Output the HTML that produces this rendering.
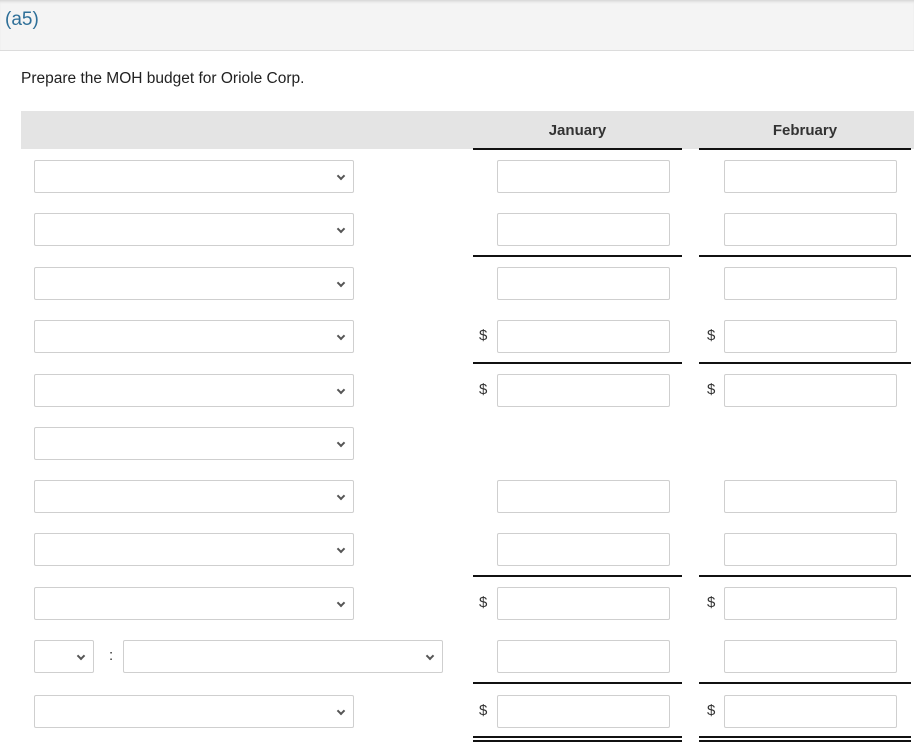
<!DOCTYPE html>
<html><head><style>
body{margin:0;width:914px;height:755px;background:#fff;font-family:"Liberation Sans",sans-serif;position:relative;overflow:hidden}
.hdr{position:absolute;left:0;top:0;width:914px;height:50px;background:#f4f4f4;border-bottom:1px solid #dcdcdc;box-shadow:inset 0 3px 3px -2px #ccc}
.a5{position:absolute;left:5px;top:9px;font-size:19px;color:#2e6f98}
.p{position:absolute;left:21px;top:70px;font-size:15.5px;color:#222}
.band{position:absolute;left:21px;top:111px;width:893px;height:38px;background:#e4e4e4}
.th{position:absolute;top:122px;font-size:15px;font-weight:bold;color:#333;text-align:center}
.in{position:absolute;height:31px;border:1px solid #cfcfcf;border-radius:2px;background:#fff;box-sizing:content-box}
.sel{left:34px;width:318px}
.sel::after{content:"";position:absolute;right:9px;top:12px;width:4px;height:4px;border-right:2px solid #555;border-bottom:2px solid #555;transform:rotate(45deg)}
.j{left:497px;width:171px}.f{left:724px;width:171px}
.ln{position:absolute;height:2px;background:#111}
.d{position:absolute;font-size:15px;color:#333}
</style></head><body>
<div class="hdr"></div><div class="a5">(a5)</div>
<div class="p">Prepare the MOH budget for Oriole Corp.</div>
<div class="band"></div>
<div class="th" style="left:473px;width:209px">January</div>
<div class="th" style="left:699px;width:212px">February</div>
<div class="ln" style="left:473px;width:209px;top:148px"></div><div class="ln" style="left:699px;width:212px;top:148px"></div>
<div class="ln" style="left:473px;width:209px;top:255px"></div><div class="ln" style="left:699px;width:212px;top:255px"></div>
<div class="ln" style="left:473px;width:209px;top:362px"></div><div class="ln" style="left:699px;width:212px;top:362px"></div>
<div class="ln" style="left:473px;width:209px;top:575px"></div><div class="ln" style="left:699px;width:212px;top:575px"></div>
<div class="ln" style="left:473px;width:209px;top:682px"></div><div class="ln" style="left:699px;width:212px;top:682px"></div>
<div class="ln" style="left:473px;width:209px;top:736px"></div><div class="ln" style="left:699px;width:212px;top:736px"></div>
<div class="ln" style="left:473px;width:209px;top:740px"></div><div class="ln" style="left:699px;width:212px;top:740px"></div>

<div class="in sel" style="top:160px"></div><div class="in j" style="top:160px"></div><div class="in f" style="top:160px"></div>
<div class="in sel" style="top:213px"></div><div class="in j" style="top:213px"></div><div class="in f" style="top:213px"></div>
<div class="in sel" style="top:267px"></div><div class="in j" style="top:267px"></div><div class="in f" style="top:267px"></div>
<div class="in sel" style="top:320px"></div><div class="in j" style="top:320px"></div><div class="in f" style="top:320px"></div>
<div class="d" style="left:479px;top:327px">$</div><div class="d" style="left:707px;top:327px">$</div>
<div class="in sel" style="top:374px"></div><div class="in j" style="top:374px"></div><div class="in f" style="top:374px"></div>
<div class="d" style="left:479px;top:381px">$</div><div class="d" style="left:707px;top:381px">$</div>
<div class="in sel" style="top:427px"></div>
<div class="in sel" style="top:480px"></div><div class="in j" style="top:480px"></div><div class="in f" style="top:480px"></div>
<div class="in sel" style="top:533px"></div><div class="in j" style="top:533px"></div><div class="in f" style="top:533px"></div>
<div class="in sel" style="top:587px"></div><div class="in j" style="top:587px"></div><div class="in f" style="top:587px"></div>
<div class="d" style="left:479px;top:594px">$</div><div class="d" style="left:707px;top:594px">$</div>
<div class="in sel" style="top:640px;width:58px"></div>
<div class="d" style="left:109px;top:647px">:</div>
<div class="in sel" style="top:640px;left:123px;width:318px"></div>
<div class="in j" style="top:640px"></div><div class="in f" style="top:640px"></div>
<div class="in sel" style="top:695px"></div><div class="in j" style="top:695px"></div><div class="in f" style="top:695px"></div>
<div class="d" style="left:479px;top:702px">$</div><div class="d" style="left:707px;top:702px">$</div>
</body></html>
